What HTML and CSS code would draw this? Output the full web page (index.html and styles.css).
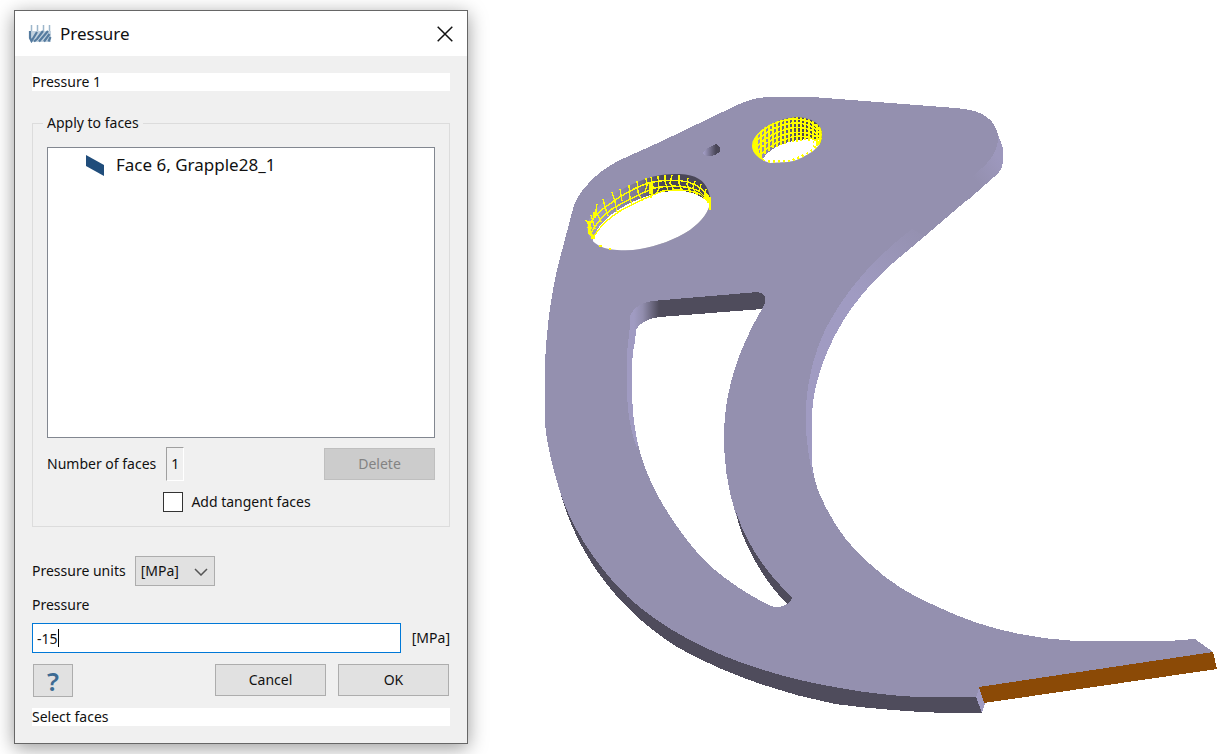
FILE: index.html
```html
<!DOCTYPE html>
<html lang="en">
<head>
<meta charset="utf-8">
<title>Pressure</title>
<link rel="stylesheet" href="styles.css">
</head>
<body>
<main class="workspace">
  <form class="dialog" role="dialog" aria-labelledby="dialog-title">
    <header class="titlebar">
      <svg class="title-icon" viewBox="0 0 24 18" aria-hidden="true">
        <path d="M3.500 0V8M9.500 0V8M15.500 0V8M21.500 0V8" fill="none" stroke="#9db6cb" stroke-width="1.500"/>
        <path d="M1 6H23V17H3L1 13Z" fill="#c3d2df"/>
        <path d="M2 6V13L3.500 16L9 7M6 16.500 9 14 15 6M11 16.500 20 6M16 16.500 21.500 9M20.500 16.500 22.500 12" fill="none" stroke="#557b9f" stroke-width="2.200"/>
      </svg>
      <h1 class="title" id="dialog-title">Pressure</h1>
      <button class="close" type="button" aria-label="Close">
        <svg class="close-icon" viewBox="0 0 16 16" aria-hidden="true"><path d="M.7.7 15.300 15.300M15.300.7.7 15.300" fill="none" stroke="#111" stroke-width="1.500"/></svg>
      </button>
    </header>
    <div class="content">
      <input class="strip" type="text" value="Pressure 1" aria-label="Name">
      <fieldset class="faces">
        <legend class="legend">Apply to faces</legend>
        <ul class="face-list">
          <li class="face">
            <svg class="face-icon" viewBox="0 0 18 21" aria-hidden="true"><path d="M0 0 18 10V21L0 11Z" fill="#204d7b"/></svg>
            <span>Face 6, Grapple28_1</span>
          </li>
        </ul>
        <div class="count-row">
          <label for="count">Number of faces</label>
          <output class="count" id="count">1</output>
          <button class="button delete" type="button" disabled>Delete</button>
        </div>
        <label class="tangent"><input class="check" type="checkbox">Add tangent faces</label>
      </fieldset>
      <div class="units">
        <label for="units">Pressure units</label>
        <div class="select-wrap">
          <select class="select" id="units"><option>[MPa]</option></select>
          <svg class="chevron" viewBox="0 0 14 8" aria-hidden="true"><path d="M1 1 7 7 13 1" fill="none" stroke="#555" stroke-width="1.500"/></svg>
        </div>
      </div>
      <label class="pressure-label" for="pressure">Pressure</label>
      <div class="value-row">
        <div class="value-wrap">
          <input class="value" id="pressure" type="text" value="-15">
          <span class="caret"></span>
        </div>
        <span>[MPa]</span>
      </div>
      <div class="actions">
        <button class="button help" type="button" aria-label="Help">?</button>
        <button class="button" type="button">Cancel</button>
        <button class="button" type="submit">OK</button>
      </div>
      <output class="strip status">Select faces</output>
    </div>
  </form>

  <svg class="model" viewBox="488 0 729 754" role="img" aria-label="Grapple arm model">
    <defs>
      <linearGradient id="corner" gradientUnits="userSpaceOnUse" x1="634" y1="0" x2="659" y2="0">
        <stop offset="0" stop-color="#a09bc2"/><stop offset=".35" stop-color="#918dad"/><stop offset="1" stop-color="#4f4c5c"/>
      </linearGradient>
      <linearGradient id="edge" gradientUnits="userSpaceOnUse" x1="925" y1="225" x2="860" y2="300">
        <stop offset="0" stop-color="#9490af"/><stop offset="1" stop-color="#a09bc2"/>
      </linearGradient>
      <linearGradient id="tip" gradientUnits="userSpaceOnUse" x1="975" y1="180" x2="1000" y2="160">
        <stop offset="0" stop-color="#9490af"/><stop offset="1" stop-color="#9d98bd"/>
      </linearGradient>
      <linearGradient id="wall" gradientUnits="userSpaceOnUse" x1="600" y1="0" x2="662" y2="0">
        <stop offset="0" stop-color="#9e99bd"/><stop offset=".6" stop-color="#7d7993"/><stop offset="1" stop-color="#4a4758"/>
      </linearGradient>
      <linearGradient id="wall2" gradientUnits="userSpaceOnUse" x1="756" y1="0" x2="800" y2="0">
        <stop offset="0" stop-color="#a09bc2"/><stop offset="1" stop-color="#4a4758"/>
      </linearGradient>
      <linearGradient id="pin" gradientUnits="userSpaceOnUse" x1="704" y1="0" x2="716" y2="0">
        <stop offset="0" stop-color="#a09bc2"/><stop offset="1" stop-color="#4a4758"/>
      </linearGradient>
      <clipPath id="big-hole"><path d="M587 231C585 224 592 213 600 205C609 196 626 186 645 179C656 175 666 174 680 174C696 175 704 180 708 190L711 200C709 212 702 221 690 230C675 240 657 246 640 249Q630 251 617 250Q602 249 595 243Q588 238 587 231Z"/></clipPath>
      <clipPath id="small-hole"><path d="M752 146Q752 137 765 127Q780 118 797 117Q814 118 820 127Q824 134 820 144Q815 151 805 156Q797 161 788 162L770 163Q760 160 756 155Q752 151 752 146Z"/></clipPath>
    </defs>
    <g shape-rendering="crispEdges">
      <path fill="#9490af" d="M768 97H812L955 108Q972 109 982 114Q993 120 996 129L1003 148V162Q1002 171 994 177L925 236L887 268C850 303 830 338 819 375Q812 397 812 420V463Q814 483 821 497C832 522 848 546 870 564C888 581 911 596 938 607C975 625 1021 638 1075 641H1168L1195 639L1213 652L984 703L982 713H945Q889 711 835 704C779 693 723 673 677 647Q650 630 628 608C597 577 573 538 561 495Q547 450 545 423V362Q548 305 559 262L574 205Q579 193 588 184Q600 170 620 160L660 142L735 106Q751 98 768 97Z"/>
      <path fill="url(#edge)" d="M912 229C874 258 848 289 831 319Q810 355 806 405V430Q808 457 813 476L812 463V420Q812 397 819 375C830 338 850 303 887 268L925 236Z"/>
      <path fill="url(#tip)" d="M998 135Q999 153 982 168L957 190L969 199L994 177Q1002 171 1003 162V148Z"/>
      <path fill="#4f4c5c" d="M561 495C573 530 598 568 628 597C661 628 709 653 760 669Q802 682 840 688Q878 695 918 697H977L982 713H945Q889 711 835 704C779 693 723 673 677 647Q650 630 628 608C597 577 573 538 561 495Z"/>
      <path fill="#a09bc2" d="M976 697 980 686 985 703 982 713Z"/>
      <path fill="#8b4a06" d="M979 687 1213 652 1217 669 984 703Z"/>

      <path fill="#a09bc2" d="M630 316V326L627 352V395Q628 425 637 448L660 360L650 315Z"/>
      <path fill="url(#corner)" d="M630 316Q635 304 652 301L758 292Q763 293 765 297V303L762 309L660 317Q643 319 636 330L630 326Z"/>
      <path fill="#fff" d="M762 309 660 317Q642 319 636 330L635 343Q632 350 632 375Q631 410 637 440Q644 473 663 505C679 531 696 553 710 566C730 583 750 596 769 605Q776 609 785 605L792 599Q761 571 742 530Q723 486 724 430Q726 370 762 309Z"/>
      <path fill="#4f4c5c" d="M736 512Q752 560 792 597L791 601 787 604Q759 575 743 536Q738 524 736 512Z"/>

      <path fill="url(#pin)" d="M703 153Q705 149 710 147L716 144Q721 147 720 151Q716 156 709 156Q704 156 703 153Z"/>

      <g clip-path="url(#big-hole)">
        <path fill="url(#wall)" d="M580 168H716V256H580Z"/>
        <path fill="#fff" d="M592 245Q594 229 608 217Q627 202 650 195Q671 189 690 192Q705 197 711 205V260H592Z"/>
      </g>
      <g fill="none" stroke="#ff0" stroke-width="1.400">
        <path d="M588 228Q594 214 607 206Q626 191 648 183Q670 178 688 182Q704 187 710 199M590 235Q598 219 612 209Q634 196 655 188Q680 183 699 191L710 202M592 239Q602 222 620 211Q646 197 663 191Q687 188 700 194L710 204"/>
        <path d="M597 204 596 211 601 222M603 199 605 207 608 216M612 192 615 202 617 212M620 189 622 201M629 185 630 198 632 205M637 181 638 192 642 201M646 178 647 185 645 192M651 177 653 187 651 198M658 176 659 188 657 193M665 175V181L668 191M672 175 670 183 674 190M679 175V183L682 191M688 178 687 184 690 193M695 181 693 188 697 195M701 184 699 192M706 189 704 199M586 220 592 229M591 215 595 229"/>
        <path stroke-width="3" d="M589 221V234M594 212V218M591 234 594 239M650 182V194M705 194 709 203"/>
        <path d="M599 246H602M609 249H611M710 197V210"/>
      </g>
      <g clip-path="url(#small-hole)">
        <path fill="url(#wall2)" d="M750 115H825V165H750Z"/>
        <path fill="#fff" d="M761 163Q765 152 780 145Q796 138 820 139V165Z"/>
        <g fill="none" stroke="#ff0" stroke-width="1.600">
          <path d="M752 142Q765 122 792 119Q814 119 821 132M753 146Q765 128 792 123Q812 122 821 135M754 150Q766 134 791 128Q812 125 821 139M756 153Q768 138 791 133Q812 130 821 141M760 156Q770 143 792 137Q808 134 820 143"/>
          <path d="M757 132V155M761 128V157M765 125V154M769 123V151M773 121V148M777 119V147M781 118V145M785 117V144M789 117V142M793 116V142M797 116V142M801 117V141M805 118V140M809 119V141M813 121V143M817 124V146M820 127V145"/>
          <path stroke-width="5" d="M753 138Q753 153 764 163"/>
          <path stroke-width="4" stroke-dasharray="2 3" d="M758 162H789Q813 155 822 136"/>
          <path stroke-width="3" d="M820 126V143"/>
        </g>
        <path fill="#fff" d="M768 158Q773 150 784 147L796 142L814 140L810 151Q800 156 785 159H770Z"/>
      </g>
    </g>
  </svg>
</main>
</body>
</html>
```
FILE: styles.css
```css
* {
  box-sizing: border-box;
}

body {
  margin: 0;
  background: #fff;
  color: #111;
  font: 14px/20px "Noto Sans", sans-serif;
}

button, input, select, output {
  font: inherit;
  color: inherit;
}

.workspace {
  display: grid;
  grid-template-columns: 454fr 729fr;
  align-items: start;
  gap: 20px;
  padding-left: 14px;
  min-height: 100vh;
  overflow: hidden;
}

.dialog {
  margin-top: 10px;
  border: 1px solid #666;
  background: #f0f0f0;
  box-shadow: 0 4px 18px rgba(0, 0, 0, 0.4);
}

.titlebar {
  display: flex;
  align-items: center;
  gap: 8px;
  height: 45px;
  padding: 0 14px 0 13px;
  background: #fff;
}

.title-icon {
  width: 24px;
  height: 18px;
}

.title {
  flex: 1;
  margin: 0;
  font-size: 17px;
  font-weight: 400;
  line-height: 24px;
}

.close {
  display: flex;
  padding: 0;
  border: 0;
  background: none;
}

.close-icon {
  width: 16px;
  height: 16px;
}

.content {
  display: flex;
  flex-direction: column;
  padding: 17px;
}

.strip {
  display: block;
  width: 100%;
  height: 18px;
  padding: 0;
  border: 0;
  background: #fff;
}

.faces {
  min-width: 0;
  margin: 22px 0 0;
  padding: 14px;
  border: 1px solid #dcdcdc;
}

.legend {
  margin-left: -4px;
  padding: 0 4px;
}

.face-list {
  height: 291px;
  margin: 0;
  padding: 4px 38px;
  border: 1px solid #828790;
  background: #fff;
  list-style: none;
}

.face {
  display: flex;
  align-items: center;
  gap: 12px;
  font-size: 17px;
  line-height: 26px;
}

.face-icon {
  width: 18px;
  height: 21px;
}

.count-row {
  display: flex;
  align-items: center;
  gap: 10px;
  margin-top: 9px;
}

.count {
  padding: 6px 4px;
  border: 1px solid;
  border-color: #a0a0a0 #fff #fff #a0a0a0;
}

.button {
  width: 111px;
  height: 32px;
  padding: 0;
  border: 1px solid #adadad;
  background: #e1e1e1;
}

.delete {
  margin-left: auto;
  border-color: #bfbfbf;
  background: #ccc;
  color: #838383;
}

.tangent {
  display: flex;
  align-items: center;
  justify-content: center;
  gap: 8px;
  margin-top: 11px;
  padding-right: 8px;
}

.check {
  appearance: none;
  width: 20px;
  height: 20px;
  margin: 0;
  border: 1px solid #333;
  background: #fff;
}

.units {
  display: flex;
  align-items: center;
  gap: 9px;
  margin-top: 29px;
}

.select-wrap {
  position: relative;
  width: 80px;
}

.select {
  appearance: none;
  display: block;
  width: 100%;
  height: 30px;
  padding: 0 5px;
  border: 1px solid #adadad;
  border-radius: 0;
  background: #e1e1e1;
}

.chevron {
  position: absolute;
  top: 12px;
  right: 7px;
  width: 14px;
  height: 8px;
  pointer-events: none;
}

.pressure-label {
  margin-top: 9px;
}

.value-row {
  display: flex;
  align-items: center;
  gap: 11px;
  margin-top: 8px;
}

.value-wrap {
  position: relative;
  flex: 1;
}

.value {
  display: block;
  width: 100%;
  height: 30px;
  padding: 0 4px;
  border: 1px solid #0078d7;
  outline: 0;
  background: #fff;
}

.caret {
  position: absolute;
  top: 6px;
  left: 26px;
  width: 1px;
  height: 18px;
  background: #000;
}

.actions {
  display: flex;
  gap: 12px;
  margin-top: 11px;
  padding: 0 1px;
}

.help {
  width: 40px;
  height: 33px;
  margin-right: auto;
  color: #3d6b93;
  font-size: 26px;
  font-weight: 600;
  line-height: 30px;
}

.status {
  margin-top: 11px;
  line-height: 18px;
}

.model {
  display: block;
  width: 100%;
  height: auto;
}
```
